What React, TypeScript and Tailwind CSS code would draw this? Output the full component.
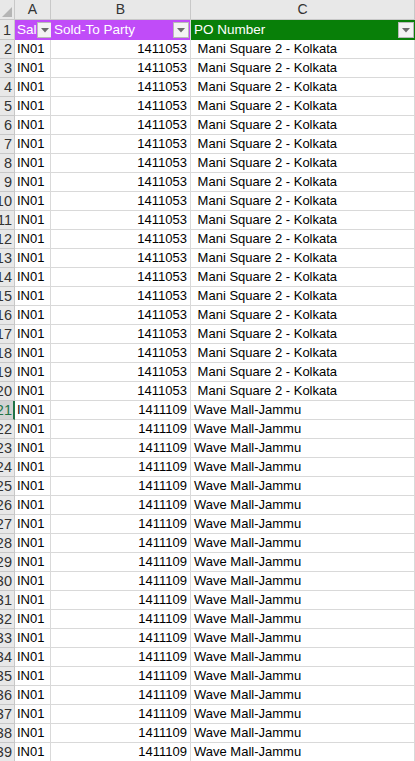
import { ReactNode } from 'react';

const rows = Array.from({ length: 38 }, (_, i) => {
  const n = i + 2;
  return n <= 20
    ? { n, sales: 'IN01', party: '1411053', po: '\u00a0Mani Square 2 - Kolkata' }
    : { n, sales: 'IN01', party: '1411109', po: 'Wave Mall-Jammu' };
});

const FilterButton = () => (
  <div className="flex h-[16px] w-[16px] shrink-0 items-center justify-center border border-[#b9b9b9] bg-[#f3f3f3]">
    <svg width="8" height="5" viewBox="0 0 8 5">
      <path d="M0 0 L8 0 L4 4.5 Z" fill="#6b6b6b" />
    </svg>
  </div>
);

const RowHead = ({ n, active }: { n: number; active?: boolean }) => (
  <div
    className={`flex h-[19px] items-end justify-end overflow-hidden border-b border-[#c8c8c8] pb-[1px] text-[14.5px] leading-[16px] whitespace-nowrap ${
      active
        ? 'border-r-2 border-r-[#217346] bg-[#d3d3d3] pr-[1px] text-[#217346]'
        : 'border-r border-r-[#c8c8c8] bg-[#e8e8e8] pr-[2px] text-[#333]'
    }`}
  >
    {n}
  </div>
);

const Cell = ({ children, className = '' }: { children?: ReactNode; className?: string }) => (
  <div
    className={`flex h-[19px] items-end overflow-hidden whitespace-nowrap border-b border-r border-[#d9d9d9] bg-white pb-[1px] text-[13px] leading-[16px] text-black ${className}`}
  >
    {children}
  </div>
);

export default function App() {
  return (
    <div
      className="h-[761px] w-[415px] overflow-hidden bg-white"
      style={{ fontFamily: '"Liberation Sans", Arial, sans-serif' }}
    >
      <div className="grid grid-cols-[15px_36px_140px_1fr]">
        {/* column letters */}
        <div className="relative h-[20px] border-b border-r border-[#c8c8c8] bg-[#e8e8e8]">
          <svg className="absolute bottom-[2px] right-[2px]" width="10" height="10" viewBox="0 0 10 10">
            <path d="M10 0 L10 10 L0 10 Z" fill="#b5b5b5" />
          </svg>
        </div>
        {['A', 'B', 'C'].map((c) => (
          <div
            key={c}
            className="flex h-[20px] items-center justify-center border-b border-r border-[#c8c8c8] bg-[#e8e8e8] text-[14px] text-[#333]"
          >
            {c}
          </div>
        ))}

        {/* header row */}
        <div className="flex h-[20px] items-center justify-end overflow-hidden border-b border-r border-[#c8c8c8] bg-[#e8e8e8] pr-[3px] text-[14.5px] leading-[16px] text-[#333]">
          1
        </div>
        <div className="flex h-[20px] items-center justify-between overflow-hidden bg-[#c04cf8] pl-[2px] pr-[1px] text-[13.5px] text-white">
          <span>Sal</span>
          <FilterButton />
        </div>
        <div className="flex h-[20px] items-center justify-between overflow-hidden border-r border-[#d9d9d9] bg-[#c04cf8] pl-[3px] pr-[1px] text-[13.5px] text-white">
          <span>Sold-To Party</span>
          <FilterButton />
        </div>
        <div className="flex h-[20px] items-center justify-between overflow-hidden bg-[#087f08] pl-[3px] pr-[1px] text-[13.5px] text-white">
          <span>PO Number</span>
          <FilterButton />
        </div>

        {rows.map((r) => (
          <div key={r.n} className="contents">
            <RowHead n={r.n} active={r.n === 21} />
            <Cell className="pl-[2px]">{r.sales}</Cell>
            <Cell className="justify-end pr-[3px]">{r.party}</Cell>
            <Cell className="pl-[3px]">{r.po}</Cell>
          </div>
        ))}
      </div>
    </div>
  );
}
